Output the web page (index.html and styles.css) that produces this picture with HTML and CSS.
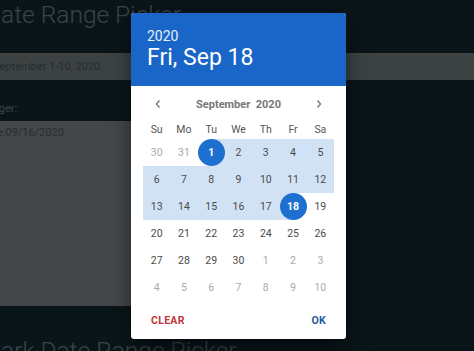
FILE: index.html
```html
<!DOCTYPE html>
<html lang="en">
<head>
    <meta charset="UTF-8">
    <meta name="viewport" content="width=device-width, initial-scale=1.0">
    <title>Date Range Picker</title>
    <link rel="stylesheet" href="styles.css">
</head>
<body>
    <div class="page">
        <h1 class="page-title">Date Range Picker</h1>
        <div class="range-field">September 1-10, 2020</div>
        <div class="field-label">Trigger:</div>
        <div class="trigger-box">Date:09/16/2020</div>
        <h1 class="page-title bottom">Dark Date Range Picker</h1>
    </div>

    <div class="picker">
        <div class="picker-header">
            <div class="picker-year">2020</div>
            <div class="picker-date">Fri, Sep 18</div>
        </div>

        <div class="picker-body">
            <div class="month-nav">
                <button class="nav-btn" aria-label="Previous month">
                    <svg width="8" height="10" viewBox="0 0 8 10"><polyline points="5.5,1.5 2.5,5 5.5,8.5" fill="none" stroke="#7a7a7a" stroke-width="1.4"/></svg>
                </button>
                <div class="month-label">September&nbsp;&nbsp;2020</div>
                <button class="nav-btn" aria-label="Next month">
                    <svg width="8" height="10" viewBox="0 0 8 10"><polyline points="2.5,1.5 5.5,5 2.5,8.5" fill="none" stroke="#7a7a7a" stroke-width="1.4"/></svg>
                </button>
            </div>

            <div class="weekdays">
                <span>Su</span><span>Mo</span><span>Tu</span><span>We</span><span>Th</span><span>Fr</span><span>Sa</span>
            </div>

            <div class="days">
                <span class="day muted">30</span>
                <span class="day muted">31</span>
                <span class="day start"><b>1</b></span>
                <span class="day in-range">2</span>
                <span class="day in-range">3</span>
                <span class="day in-range">4</span>
                <span class="day in-range">5</span>

                <span class="day in-range">6</span>
                <span class="day in-range">7</span>
                <span class="day in-range">8</span>
                <span class="day in-range">9</span>
                <span class="day in-range">10</span>
                <span class="day in-range">11</span>
                <span class="day in-range">12</span>

                <span class="day in-range">13</span>
                <span class="day in-range">14</span>
                <span class="day in-range">15</span>
                <span class="day in-range">16</span>
                <span class="day in-range">17</span>
                <span class="day end"><b>18</b></span>
                <span class="day">19</span>

                <span class="day">20</span>
                <span class="day">21</span>
                <span class="day">22</span>
                <span class="day">23</span>
                <span class="day">24</span>
                <span class="day">25</span>
                <span class="day">26</span>

                <span class="day">27</span>
                <span class="day">28</span>
                <span class="day">29</span>
                <span class="day">30</span>
                <span class="day muted">1</span>
                <span class="day muted">2</span>
                <span class="day muted">3</span>

                <span class="day muted">4</span>
                <span class="day muted">5</span>
                <span class="day muted">6</span>
                <span class="day muted">7</span>
                <span class="day muted">8</span>
                <span class="day muted">9</span>
                <span class="day muted">10</span>
            </div>
        </div>

        <div class="picker-actions">
            <button class="action clear">CLEAR</button>
            <button class="action ok">OK</button>
        </div>
    </div>
</body>
</html>
```

FILE: styles.css
```css
:root {
    --page-bg: #0a1519;
    --page-text: #3a4448;
    --field-bg: #3c4242;
    --box-bg: #434747;
    --field-text: #272d2f;
    --primary: #1a66c8;
    --circle: #1d70d0;
    --band: #d2e2f5;
    --day-text: #4a4a4a;
    --muted-text: #aaaaaa;
}

* {
    margin: 0;
    padding: 0;
    box-sizing: border-box;
}

body {
    font-family: Roboto, "Liberation Sans", sans-serif;
    background-color: var(--page-bg);
    width: 474px;
    height: 351px;
    overflow: hidden;
}

.page {
    display: flex;
    flex-direction: column;
}

.page-title {
    font-size: 24.5px;
    font-weight: 300;
    line-height: 30px;
    color: var(--page-text);
    margin-left: -15px;
    white-space: nowrap;
}

.page-title.bottom {
    margin-top: 30px;
}

.range-field {
    margin-top: 23px;
    height: 27px;
    line-height: 27px;
    background-color: var(--field-bg);
    color: var(--field-text);
    font-size: 11px;
    margin-left: -7px;
    white-space: nowrap;
}

.field-label {
    margin-top: 21px;
    font-size: 11px;
    line-height: 16px;
    color: var(--page-text);
    margin-left: -20px;
}

.trigger-box {
    margin-top: 4px;
    width: 260px;
    height: 185px;
    background-color: var(--box-bg);
    color: var(--field-text);
    font-size: 11px;
    padding-top: 5px;
    line-height: 14px;
    margin-left: -20px;
}

/* picker dialog */

.picker {
    position: absolute;
    left: 131px;
    top: 13px;
    width: 215px;
    height: 326px;
    background-color: #fff;
    border-radius: 3px;
    overflow: hidden;
    box-shadow: 0 8px 20px rgba(0, 0, 0, 0.5);
    display: flex;
    flex-direction: column;
}

.picker-header {
    height: 73px;
    background-color: var(--primary);
    color: #fff;
    padding: 14px 16px 0;
}

.picker-year {
    font-size: 14px;
    line-height: 18px;
    opacity: 0.9;
}

.picker-date {
    font-size: 23px;
    line-height: 26px;
}

.picker-body {
    padding: 6px 12px 0 12px;
}

.month-nav {
    height: 24px;
    display: flex;
    align-items: center;
    justify-content: space-between;
}

.nav-btn {
    width: 30px;
    height: 24px;
    border: none;
    background: none;
    display: flex;
    align-items: center;
    justify-content: center;
}

.month-label {
    font-size: 11px;
    font-weight: 700;
    color: #777;
}

.weekdays,
.days {
    display: grid;
    grid-template-columns: repeat(7, 1fr);
}

.weekdays {
    margin-top: 3px;
    height: 20px;
    align-items: center;
    text-align: center;
    font-size: 10.5px;
    color: #555;
}

.day {
    height: 27px;
    display: flex;
    align-items: center;
    justify-content: center;
    font-size: 10.5px;
    color: var(--day-text);
}

.day.muted {
    color: var(--muted-text);
}

.day.in-range {
    background-color: var(--band);
}

.day.start {
    background: linear-gradient(to right, transparent 50%, var(--band) 50%);
}

.day.end {
    background: linear-gradient(to right, var(--band) 50%, transparent 50%);
}

.day b {
    width: 27px;
    height: 27px;
    border-radius: 50%;
    background-color: var(--circle);
    color: #fff;
    font-weight: 700;
    display: flex;
    align-items: center;
    justify-content: center;
}

.picker-actions {
    flex: 1;
    display: flex;
    align-items: center;
    justify-content: space-between;
    padding: 0 12px;
}

.action {
    border: none;
    background: none;
    font-family: inherit;
    font-size: 10.5px;
    font-weight: 700;
    letter-spacing: 0.3px;
    padding: 6px 8px;
}

.action.clear {
    color: #c0353a;
}

.action.ok {
    color: #1d5a9e;
}
```
